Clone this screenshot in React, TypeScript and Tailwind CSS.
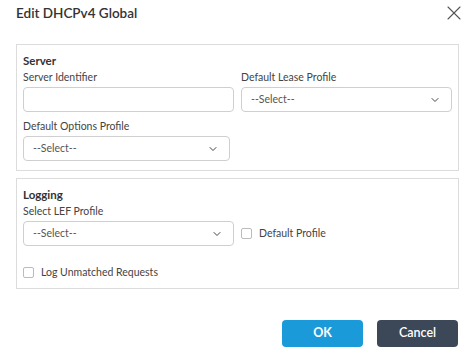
import { ChevronDown, X } from "lucide-react";

function Select({ className = "" }: { className?: string }) {
  return (
    <div
      className={`flex h-[25px] items-center justify-between rounded-[4px] border border-[#cfcfcf] bg-white pl-[9px] pr-[10px] text-[10.5px] text-[#555] ${className}`}
    >
      <span>--Select--</span>
      <ChevronDown size={12} strokeWidth={2} className="text-[#444]" />
    </div>
  );
}

function Check({ label }: { label: string }) {
  return (
    <label className="flex items-center gap-[7px] text-[10.5px] text-[#444]">
      <span className="h-[11px] w-[11px] rounded-[2px] border border-[#bbb] bg-white" />
      {label}
    </label>
  );
}

export default function App() {
  return (
    <div
      className="h-[357px] w-[474px] bg-white text-[#333]"
      style={{ fontFamily: "Lato, 'Liberation Sans', sans-serif" }}
    >
      {/* header */}
      <div className="flex h-[26px] items-center justify-between pl-[16px] pr-[8px]">
        <h1 className="text-[13.5px] font-semibold text-[#333]">Edit DHCPv4 Global</h1>
        <X size={24} strokeWidth={1.1} className="text-[#555]" />
      </div>

      <div className="mx-[16px] mt-[18px] flex w-[443px] flex-col gap-[7px]">
        {/* Server */}
        <div className="h-[127px] border border-[#dcdcdc] px-[6px] pt-[9px]">
          <div className="text-[11.5px] font-bold leading-[14px]">Server</div>
          <div className="mt-[2px] grid grid-cols-[211px_211px] gap-x-[7px]">
            <div>
              <div className="text-[10.5px] leading-[14px] text-[#444]">Server Identifier</div>
              <div className="mt-[3px] h-[25px] rounded-[4px] border border-[#cfcfcf]" />
              <div className="mt-[7px] text-[10.5px] leading-[14px] text-[#444]">
                Default Options Profile
              </div>
              <Select className="mt-[3px] w-[207px]" />
            </div>
            <div>
              <div className="text-[10.5px] leading-[14px] text-[#444]">Default Lease Profile</div>
              <Select className="mt-[3px]" />
            </div>
          </div>
        </div>

        {/* Logging */}
        <div className="h-[111px] border border-[#dcdcdc] px-[6px] pt-[9px]">
          <div className="text-[11.5px] font-bold leading-[14px]">Logging</div>
          <div className="mt-[2px] text-[10.5px] leading-[14px] text-[#444]">Select LEF Profile</div>
          <div className="mt-[3px] flex items-center gap-[7px]">
            <Select className="w-[211px]" />
            <Check label="Default Profile" />
          </div>
          <div className="mt-[19px]">
            <Check label="Log Unmatched Requests" />
          </div>
        </div>
      </div>

      {/* footer */}
      <div className="mt-[31px] flex justify-end gap-[14px] pr-[16px]">
        <button className="h-[27px] w-[81px] rounded-[4px] bg-[#1a9ad9] text-[12.5px] font-bold text-white">
          OK
        </button>
        <button className="h-[27px] w-[81px] rounded-[4px] bg-[#3c4858] text-[12.5px] font-semibold text-white">
          Cancel
        </button>
      </div>
    </div>
  );
}
